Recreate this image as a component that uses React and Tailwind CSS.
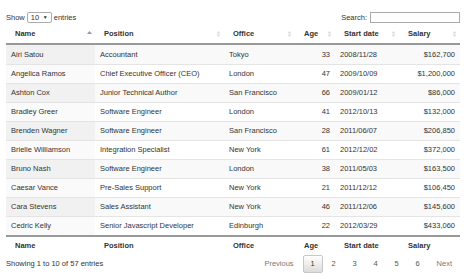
import React from "react";

const rows = [
    ["Airi Satou", "Accountant", "Tokyo", "33", "2008/11/28", "$162,700"],
    ["Angelica Ramos", "Chief Executive Officer (CEO)", "London", "47", "2009/10/09", "$1,200,000"],
    ["Ashton Cox", "Junior Technical Author", "San Francisco", "66", "2009/01/12", "$86,000"],
    ["Bradley Greer", "Software Engineer", "London", "41", "2012/10/13", "$132,000"],
    ["Brenden Wagner", "Software Engineer", "San Francisco", "28", "2011/06/07", "$206,850"],
    ["Brielle Williamson", "Integration Specialist", "New York", "61", "2012/12/02", "$372,000"],
    ["Bruno Nash", "Software Engineer", "London", "38", "2011/05/03", "$163,500"],
    ["Caesar Vance", "Pre-Sales Support", "New York", "21", "2011/12/12", "$106,450"],
    ["Cara Stevens", "Sales Assistant", "New York", "46", "2011/12/06", "$145,600"],
    ["Cedric Kelly", "Senior Javascript Developer", "Edinburgh", "22", "2012/03/29", "$433,060"],
];

const heads = ["Name", "Position", "Office", "Age", "Start date", "Salary"];
const cols = "grid grid-cols-[89px_129px_71px_40px_64px_61px]";

function SortIcon({active}) {
    if (active) {
        return (
            <svg width="5" height="8" viewBox="0 0 5 8">
                <path d="M2.5 1L5 4H0z" fill="#8f98b4"/>
            </svg>
        );
    }
    return (
        <svg width="5" height="8" viewBox="0 0 5 8">
            <path d="M2.5 1L4.5 3.5H0.5z" fill="#dcdcdc"/>
            <path d="M2.5 7L4.5 4.5H0.5z" fill="#dcdcdc"/>
        </svg>
    );
}

function App() {
    return (
        <div className="w-[474px] h-[279px] bg-white text-[#333] text-[7.5px] font-['Liberation_Sans',Arial,sans-serif] leading-none">
            <div className="ml-[6px] w-[454px] pt-[12px]">
                <div className="flex justify-between items-center h-[11px]">
                    <div className="flex items-center">
                        <span>Show</span>
                        <div className="ml-[2px] mr-[2px] w-[25px] h-[11px] border border-[#aaa] rounded-[2px] flex items-center justify-between px-[3px]">
                            <span>10</span>
                            <span className="text-[5px]">▼</span>
                        </div>
                        <span>entries</span>
                    </div>
                    <div className="flex items-center">
                        <span className="mr-[3px]">Search:</span>
                        <div className="w-[90px] h-[11px] border border-[#aaa]"></div>
                    </div>
                </div>

                <div className="mt-[1px]">
                    <div className={cols + " h-[21px] border-b-2 border-[#999] font-bold"}>
                        {heads.map((h, i) => (
                            <div key={h} className="flex items-center justify-between pl-[9px] pr-[3px]">
                                <span>{h}</span>
                                <SortIcon active={i === 0}/>
                            </div>
                        ))}
                    </div>
                    {rows.map((r, idx) => {
                        const odd = idx % 2 === 0;
                        return (
                            <div key={r[0]} className={cols + " h-[19px] " + (idx > 0 ? "border-t border-[#e4e4e4] " : "") + (odd ? "bg-[#f9f9f9]" : "bg-white")}>
                                {r.map((c, i) => (
                                    <div key={i} className={"flex items-center px-[5px] " + (i === 3 || i === 5 ? "justify-end " : "") + (i === 0 ? (odd ? "bg-[#f1f1f1]" : "bg-[#fafafa]") : "")}>
                                        {c}
                                    </div>
                                ))}
                            </div>
                        );
                    })}
                    <div className={cols + " h-[20px] border-t-2 border-[#999] font-bold"}>
                        {heads.map((h) => (
                            <div key={h} className="flex items-center pl-[9px]">{h}</div>
                        ))}
                    </div>
                </div>

                <div className="flex justify-between items-center h-[18px]">
                    <span>Showing 1 to 10 of 57 entries</span>
                    <div className="flex items-center gap-[1px]">
                        <span className="px-[8px] text-[#777]">Previous</span>
                        <span className="w-[20px] h-[18px] flex items-center justify-center border border-[#c8c8c8] rounded-[2px] bg-gradient-to-b from-white to-[#dcdcdc]">1</span>
                        {["2", "3", "4", "5", "6"].map((n) => (
                            <span key={n} className="w-[20px] h-[18px] flex items-center justify-center text-[#555]">{n}</span>
                        ))}
                        <span className="px-[8px] text-[#777]">Next</span>
                    </div>
                </div>
            </div>
        </div>
    );
}

export default App;
